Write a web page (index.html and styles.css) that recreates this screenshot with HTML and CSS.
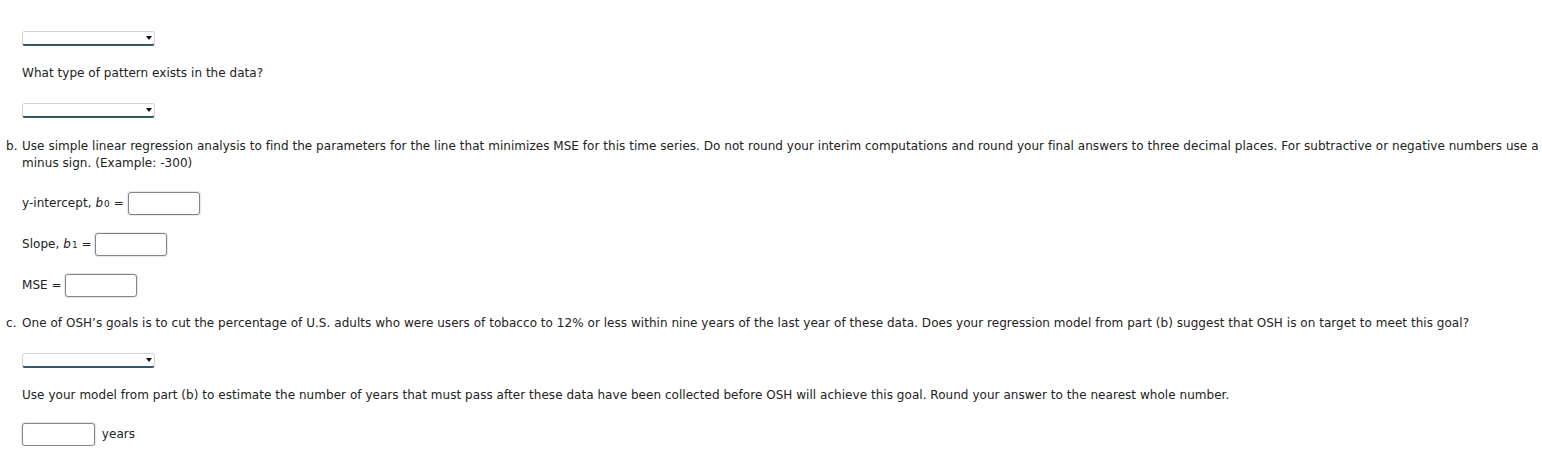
FILE: index.html
```html
<!DOCTYPE html>
<html>
<head>
<meta charset="utf-8">
<link rel="stylesheet" href="styles.css">
</head>
<body>
<div class="page">
  <div class="indent">
    <div class="field-select first"><span class="sel"><select><option></option></select></span></div>
    <p class="text">What type of pattern exists in the data?</p>
    <div class="field-select"><span class="sel"><select><option></option></select></span></div>
  </div>

  <div class="item part-b">
    <span class="label">b.</span>
    <div class="body">
      <p class="text">Use simple linear regression analysis to find the parameters for the line that minimizes MSE for this time series. Do not round your interim computations and round your final answers to three decimal places. For subtractive or negative numbers use a minus sign. (Example: -300)</p>
      <div class="row first-row">y-intercept, <i class="var">b</i><sub>0</sub>&nbsp;= <input type="text" class="box"></div>
      <div class="row">Slope, <i class="var">b</i><sub>1</sub>&nbsp;= <input type="text" class="box"></div>
      <div class="row">MSE = <input type="text" class="box"></div>
    </div>
  </div>

  <div class="item part-c">
    <span class="label">c.</span>
    <div class="body">
      <p class="text">One of OSH’s goals is to cut the percentage of U.S. adults who were users of tobacco to 12% or less within nine years of the last year of these data. Does your regression model from part (b) suggest that OSH is on target to meet this goal?</p>
      <div class="field-select"><span class="sel"><select><option></option></select></span></div>
      <p class="text">Use your model from part (b) to estimate the number of years that must pass after these data have been collected before OSH will achieve this goal. Round your answer to the nearest whole number.</p>
      <div class="row years-row"><input type="text" class="box"> years</div>
    </div>
  </div>
</div>
</body>
</html>
```
FILE: styles.css
```css
html, body {
  margin: 0;
  padding: 0;
  background: #ffffff;
}
body {
  font-family: "DejaVu Sans", Verdana, sans-serif;
  font-size: 12px;
  color: #222222;
  line-height: 17px;
  letter-spacing: 0.04px;
}
.page {
  padding: 0 0 0 6px;
}
.indent {
  padding-left: 16px;
}
.text {
  margin: 0;
}
.field-select {
  height: 15px;
  margin: 20px 0;
}
.field-select.first {
  margin-top: 30px;
}
.sel {
  position: relative;
  display: inline-block;
  width: 133px;
  height: 15px;
}
.sel select {
  -webkit-appearance: none;
  appearance: none;
  display: block;
  width: 133px;
  height: 15px;
  margin: 0;
  padding: 0;
  box-sizing: border-box;
  border: 1px solid #d4d4d4;
  border-bottom: 2px solid #3a5660;
  border-radius: 3px;
  background: #ffffff;
  font-family: inherit;
  font-size: 11px;
}
.sel::after {
  content: "";
  position: absolute;
  right: 3px;
  top: 5px;
  border-left: 3.5px solid transparent;
  border-right: 3.5px solid transparent;
  border-top: 4px solid #111111;
}
.item {
  display: flex;
}
.item .label {
  width: 16px;
  flex: none;
}
.item .body {
  flex: 1;
  min-width: 0;
}
.part-b {
  margin-top: 21px;
}
.part-c {
  margin-top: 18px;
}
.row {
  display: flex;
  align-items: center;
  height: 23px;
  margin-top: 18px;
  white-space: pre;
}
.row.first-row {
  margin-top: 20px;
}
.var {
  font-family: "DejaVu Sans", Verdana, sans-serif;
  font-style: italic;
  font-size: 12px;
}
sub {
  font-size: 9px;
  vertical-align: -3px;
  line-height: 0;
  margin-left: 1px;
}
.box {
  width: 72px;
  height: 23px;
  box-sizing: border-box;
  margin: 0;
  padding: 0 3px;
  border: 1px solid #858585;
  border-radius: 3px;
  background: #ffffff;
  font-family: inherit;
  font-size: 12px;
  box-shadow: 0 0 1px 1px #e6e6e6;
}
.years-row {
  margin-top: 19px;
}
.years-row .box {
  width: 73px;
  margin-right: 3px;
}
```
